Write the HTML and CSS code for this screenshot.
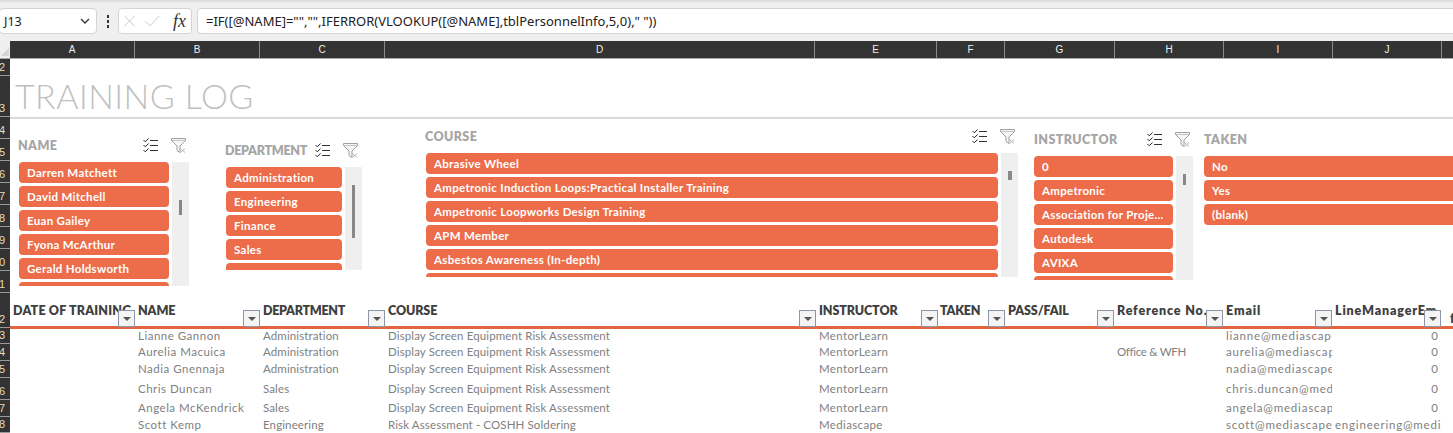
FILE: index.html
```html
<!DOCTYPE html>
<html lang="en">
<head>
<meta charset="utf-8">
<title>Training Log</title>
<link rel="stylesheet" href="styles.css">
</head>
<body>
<svg class="defs" width="0" height="0" aria-hidden="true">
  <symbol id="checks" viewBox="0 0 15 14">
    <path d="M0.5 2 2.3 3.8 5.6 0.5M0.5 7 2.3 8.8 5.6 5.5M0.5 12 2.3 13.8 5.6 10.5" fill="none" stroke="#222" stroke-width="1"/>
    <path d="M7 2.5H15M7 7.5H15M7 12.5H15" fill="none" stroke="#333" stroke-width="1"/>
  </symbol>
  <symbol id="clearfilter" viewBox="0 0 15 15">
    <path d="M0.5 0.5H14.5V2.5L9 8V14.5L6 12.5V8L0.5 2.5Z" fill="#f6f6f6" stroke="#a0a0a0" stroke-width="1"/>
    <path d="M1 2.5H14" stroke="#c4c4c4" stroke-width="1"/>
    <path d="M9.5 10.5 14 14.5M14 10.5 9.5 14.5" stroke="#b5b5b5" stroke-width="1" fill="none"/>
  </symbol>
</svg>

<div class="app">
  <header class="formula-bar">
    <div class="name-box"><span>J13</span>
      <svg class="chevron" width="10" height="6" viewBox="0 0 10 6"><path d="M1 1 5 5 9 1" fill="none" stroke="#333" stroke-width="1.3"/></svg>
    </div>
    <div class="grip"><i></i><i></i><i></i></div>
    <div class="fx-box">
      <svg width="12" height="12" viewBox="0 0 12 12"><path d="M0.5 0.5 11.5 11.5M11.5 0.5 0.5 11.5" fill="none" stroke="#c4c4c4" stroke-width="1"/></svg>
      <svg width="16" height="12" viewBox="0 0 16 12"><path d="M0.5 6.5 5.5 11 15.5 0.5" fill="none" stroke="#c4c4c4" stroke-width="1"/></svg>
      <span class="fx">fx</span>
    </div>
    <div class="formula">=IF([@NAME]="","",IFERROR(VLOOKUP([@NAME],tblPersonnelInfo,5,0)," "))</div>
  </header>

  <div class="col-heads">
    <div class="corner"></div>
    <div class="col-letters">
      <span>A</span><span>B</span><span>C</span><span>D</span><span>E</span><span>F</span><span>G</span><span>H</span><span>I</span><span>J</span><span></span>
    </div>
  </div>

  <div class="sheet">
    <div class="row-heads">
      <span class="rh-2">2</span><span class="rh-3">3</span><span class="rh-s">4</span><span class="rh-s">5</span><span class="rh-s">6</span><span class="rh-s">7</span><span class="rh-s">8</span><span class="rh-s">9</span><span class="rh-s">0</span><span class="rh-s">1</span><span class="rh-12">2</span><span class="rh-d1">3</span><span class="rh-d2">4</span><span class="rh-d2">5</span><span class="rh-d3">6</span><span class="rh-d2">7</span><span class="rh-d1">8</span>
    </div>

    <main class="canvas">
      <div class="blank-row"></div>
      <h1 class="title">TRAINING LOG</h1>

      <section class="slicers">
        <div class="slicer sl-name">
          <div class="sl-head"><span class="sl-title">NAME</span>
            <svg class="ic-checks"><use href="#checks"/></svg><svg class="ic-filter"><use href="#clearfilter"/></svg></div>
          <div class="sl-body">
            <ul class="sl-items">
              <li>Darren Matchett</li><li>David Mitchell</li><li>Euan Gailey</li><li>Fyona McArthur</li><li>Gerald Holdsworth</li><li></li>
            </ul>
            <div class="track"><div class="thumb th-name"></div></div>
          </div>
        </div>

        <div class="slicer sl-dept">
          <div class="sl-head"><span class="sl-title">DEPARTMENT</span>
            <svg class="ic-checks"><use href="#checks"/></svg><svg class="ic-filter"><use href="#clearfilter"/></svg></div>
          <div class="sl-body">
            <ul class="sl-items">
              <li>Administration</li><li>Engineering</li><li>Finance</li><li>Sales</li><li></li>
            </ul>
            <div class="track"><div class="thumb th-dept"></div></div>
          </div>
        </div>

        <div class="slicer sl-course">
          <div class="sl-head"><span class="sl-title">COURSE</span>
            <svg class="ic-checks"><use href="#checks"/></svg><svg class="ic-filter"><use href="#clearfilter"/></svg></div>
          <div class="sl-body">
            <ul class="sl-items">
              <li>Abrasive Wheel</li><li>Ampetronic Induction Loops:Practical Installer Training</li><li>Ampetronic Loopworks Design Training</li><li>APM Member</li><li>Asbestos Awareness (In-depth)</li><li></li>
            </ul>
            <div class="track"><div class="thumb th-course"></div></div>
          </div>
        </div>

        <div class="slicer sl-instr">
          <div class="sl-head"><span class="sl-title">INSTRUCTOR</span>
            <svg class="ic-checks"><use href="#checks"/></svg><svg class="ic-filter"><use href="#clearfilter"/></svg></div>
          <div class="sl-body">
            <ul class="sl-items">
              <li>0</li><li>Ampetronic</li><li>Association for Proje...</li><li>Autodesk</li><li>AVIXA</li><li></li>
            </ul>
            <div class="track"><div class="thumb th-instr"></div></div>
          </div>
        </div>

        <div class="slicer sl-taken">
          <div class="sl-head"><span class="sl-title">TAKEN</span></div>
          <div class="sl-body">
            <ul class="sl-items">
              <li>No</li><li>Yes</li><li>(blank)</li>
            </ul>
          </div>
        </div>
      </section>

      <section class="table">
        <div class="t-row t-head">
          <div class="th first">DATE OF TRAINING<button class="fbtn"></button></div>
          <div class="th">NAME<button class="fbtn"></button></div>
          <div class="th dept">DEPARTMENT<button class="fbtn"></button></div>
          <div class="th">COURSE<button class="fbtn"></button></div>
          <div class="th">INSTRUCTOR<button class="fbtn"></button></div>
          <div class="th taken">TAKEN<button class="fbtn"></button></div>
          <div class="th">PASS/FAIL<button class="fbtn"></button></div>
          <div class="th mixed">Reference No.<button class="fbtn"></button></div>
          <div class="th mixed">Email<button class="fbtn"></button></div>
          <div class="th mixed">LineManagerEm<button class="fbtn"></button></div>
          <div class="th stray">f</div>
        </div>
        <div class="t-row h16"><div></div><div>Lianne Gannon</div><div>Administration</div><div>Display Screen Equipment Risk Assessment</div><div>MentorLearn</div><div></div><div></div><div></div><div class="clip">lianne@mediascape.co.uk</div><div class="num">0</div></div>
        <div class="t-row h17"><div></div><div>Aurelia Macuica</div><div>Administration</div><div>Display Screen Equipment Risk Assessment</div><div>MentorLearn</div><div></div><div></div><div>Office &amp; WFH</div><div class="clip">aurelia@mediascape.co.uk</div><div class="num">0</div></div>
        <div class="t-row h17"><div></div><div>Nadia Gnennaja</div><div>Administration</div><div>Display Screen Equipment Risk Assessment</div><div>MentorLearn</div><div></div><div></div><div></div><div class="clip">nadia@mediascape.co.uk</div><div class="num">0</div></div>
        <div class="t-row h22"><div></div><div>Chris Duncan</div><div>Sales</div><div>Display Screen Equipment Risk Assessment</div><div>MentorLearn</div><div></div><div></div><div></div><div class="clip">chris.duncan@mediascape.co.uk</div><div class="num">0</div></div>
        <div class="t-row h17"><div></div><div>Angela McKendrick</div><div>Sales</div><div>Display Screen Equipment Risk Assessment</div><div>MentorLearn</div><div></div><div></div><div></div><div class="clip">angela@mediascape.co.uk</div><div class="num">0</div></div>
        <div class="t-row h16"><div></div><div>Scott Kemp</div><div>Engineering</div><div>Risk Assessment - COSHH Soldering</div><div>Mediascape</div><div></div><div></div><div></div><div class="clip">scott@mediascape</div><div class="clip">engineering@mediascape.co.uk</div></div>
      </section>
    </main>
  </div>
</div>
</body>
</html>
```
FILE: styles.css
```css
* { box-sizing: border-box; }
html, body { margin: 0; padding: 0; height: 433px; overflow: hidden; background: #fff; }
body { font-family: "Lato", "Liberation Sans", sans-serif; }
.defs { position: absolute; }
.app { display: flex; flex-direction: column; width: 1453px; height: 433px; overflow: hidden; }

/* formula bar */
.formula-bar {
  height: 41px; flex: none; display: flex; align-items: flex-start; padding-top: 8px;
  background: linear-gradient(#d6d6d6 0, #efefef 3px);
}
.name-box, .fx-box, .formula {
  height: 26px; background: #fff; border: 1px solid #d4d4d4; border-radius: 4px;
  font-family: "Noto Sans", sans-serif; color: #222;
  display: flex; align-items: center;
}
.name-box { width: 98px; margin-left: -1px; padding: 0 6px 0 4px; justify-content: space-between; font-size: 12.5px; }
.grip { width: 21px; height: 26px; display: flex; flex-direction: column; align-items: center; justify-content: center; gap: 2px; }
.grip i { width: 2px; height: 3px; background: #333; display: block; }
.fx-box { width: 74px; padding: 0 5px; gap: 10px; }
.fx { font-family: "Liberation Serif", serif; font-style: italic; font-size: 18px; color: #333; margin-left: 3px; line-height: 1; }
.formula { flex: 1; margin-left: 5px; margin-right: -4px; padding-left: 8px; font-size: 13px; }

/* column letters */
.col-heads { height: 18px; flex: none; display: flex; background: #333; border-bottom: 1px solid #aaa; }
.corner { width: 10px; flex: none; background: #efefef; position: relative; }
.corner::after { content: ""; position: absolute; right: 1px; bottom: 2px; border-style: solid; border-width: 0 0 8px 8px; border-color: transparent transparent #d4d4d4 transparent; }
.col-letters { display: grid; grid-template-columns: 125px 125px 125px 430px 122px 68px 110px 109px 109px 109px 11px; flex: 1; }
.col-letters span { color: #eee; font-size: 10px; text-align: center; line-height: 17px; border-right: 1px solid #8a8a8a; font-family: "Liberation Sans", sans-serif; }
.col-letters span:last-child { border-right: 0; }

/* sheet */
.sheet { flex: 1; display: flex; min-height: 0; }
.row-heads { width: 10px; flex: none; display: flex; flex-direction: column; background: #333; overflow: hidden; }
.row-heads span {
  flex: none; display: flex; align-items: flex-end; font-size: 11px; color: #e8d9b8; line-height: 13px;
  border-bottom: 1px solid #9a9a9a; padding-left: 0; margin-left: -1px; font-family: "Liberation Sans", sans-serif; padding-bottom: 1px;
}
.rh-2 { height: 17px; }
.rh-3 { height: 41px; }
.rh-s { height: 22px; }
.rh-12 { height: 35px; }
.rh-d1 { height: 16px; }
.rh-d2 { height: 17px; }
.rh-d3 { height: 22px; }

.canvas { flex: 1; min-width: 0; display: flex; flex-direction: column; overflow: hidden; }
.blank-row { height: 17px; flex: none; }
.title {
  height: 43px; flex: none; margin: 0; padding: 2px 0 0 5px; border-bottom: 2px solid #d9d9d9;
  font-weight: 300; font-size: 34px; line-height: 36px; color: #bfbfbf; letter-spacing: 0.43px;
}

/* slicers float over the sheet */
.slicers { height: 174px; flex: none; position: relative; }
.slicer { position: absolute; }
.sl-name   { left: 8px;    top: 13px; width: 171px; }
.sl-dept   { left: 215px;  top: 18px; width: 137px; }
.sl-course { left: 415px;  top: 4px;  width: 593px; }
.sl-instr  { left: 1024px; top: 7px;  width: 159px; }
.sl-taken  { left: 1194px; top: 7px;  width: 300px; }

.sl-head { height: 30px; padding: 0 3px 4px 0; display: flex; align-items: center; }
.sl-dept .sl-head { padding-right: 4px; }
.sl-title { margin-right: auto; font-weight: 800; font-size: 12.5px; color: #a6a6a6; letter-spacing: 0.4px; }
.sl-dept .sl-title { letter-spacing: -0.3px; }
.ic-checks { width: 15px; height: 14px; margin-right: 13px; }
.ic-filter { width: 15px; height: 15px; }

.sl-body { display: flex; gap: 3px; padding-left: 1px; }
.sl-taken .sl-body, .sl-instr .sl-body { padding-left: 0; }
.sl-items { flex: 1; min-width: 0; margin: 0; padding: 0; list-style: none; display: flex; flex-direction: column; gap: 3px; height: 124px; overflow: hidden; }
.sl-dept .sl-items { height: 103px; }
.sl-items li {
  flex: none; height: 21px; border-radius: 4px; background: #ed6d4a; color: #fff;
  font-weight: 700; font-size: 11.5px; line-height: 21px; padding-left: 8px; letter-spacing: 0.3px;
  white-space: nowrap; overflow: hidden;
}
.track { flex: none; width: 17px; background: #efefef; display: flex; flex-direction: column; align-items: center; }
.thumb { width: 3px; background: #888; }
.th-name { height: 15px; margin-top: 38px; }
.th-dept { height: 53px; margin-top: 18px; }
.th-course { height: 9px; margin-top: 18px; width: 4px; }
.th-instr { height: 11px; margin-top: 18px; }

/* table */
.table { flex: 1; min-height: 0; }
.t-row { display: grid; grid-template-columns: 125px 125px 125px 431px 122px 67px 109px 109px 109px 109px 12px; }
.t-row > div { position: relative; padding-left: 3px; white-space: nowrap; }
.t-head { height: 36px; border-bottom: 3px solid #e2653f; }
.th { font-weight: 800; font-size: 12.5px; line-height: 16px; padding-top: 10px; color: #404040; letter-spacing: -0.1px; }
.t-head > .first { letter-spacing: 0.2px; }
.t-head > .dept { letter-spacing: -0.3px; }
.t-head > .mixed { letter-spacing: 0.85px; }
.t-head > .taken { padding-left: 2px; letter-spacing: -0.2px; }
.t-head .th.stray { padding-top: 18px; padding-left: 9px; }
.fbtn {
  position: absolute; right: 0; bottom: 0; width: 17px; height: 17px; padding: 0;
  background: #f4f4f4; border: 1px solid #8d96a8;
}
.fbtn::after {
  content: ""; position: absolute; left: 4px; top: 6px; border-style: solid; border-width: 4px 4px 0 4px;
  border-color: #555 transparent transparent transparent;
}
.t-row:not(.t-head) > div { font-size: 11.5px; line-height: 13px; padding-bottom: 4px; color: #808080; letter-spacing: 0.12px; display: flex; align-items: center; }
.t-row.h22:not(.t-head) > div { padding-bottom: 3px; }
.t-row:not(.t-head) > div:nth-child(2) { letter-spacing: 0.5px; }
.t-row:not(.t-head) > div:nth-child(5) { letter-spacing: 0.35px; }
.t-row:not(.t-head) > div:nth-child(8) { letter-spacing: -0.3px; }
.t-row:not(.t-head) > .clip { overflow: hidden; letter-spacing: 0.8px; }
.t-row > .num { justify-content: flex-end; padding-right: 3px; }
.h16 { height: 16px; }
.h17 { height: 17px; }
.h22 { height: 22px; }
```
